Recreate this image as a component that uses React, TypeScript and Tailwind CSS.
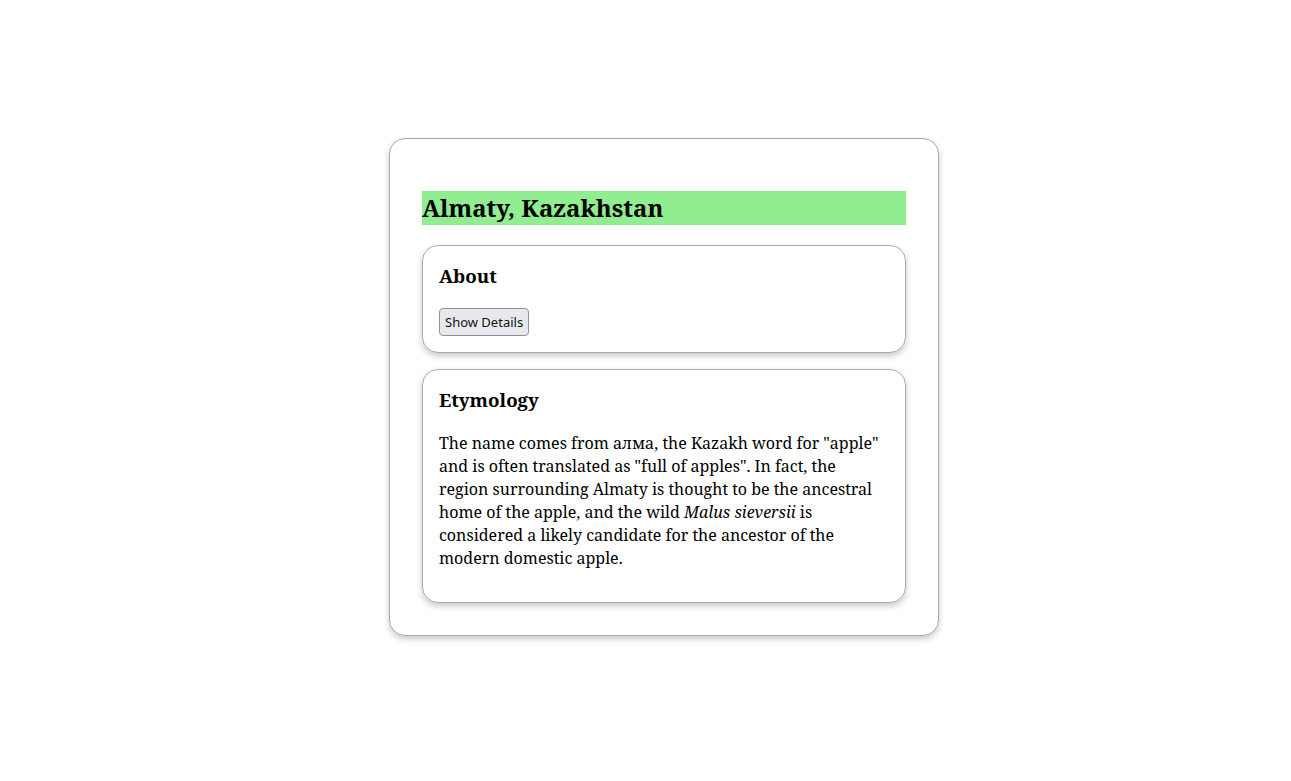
export default function App() {
  return (
    <div
      className="min-h-screen bg-white pl-[389px] pt-[138px] text-black"
      style={{ fontFamily: '"Noto Serif", "DejaVu Serif", serif' }}
    >
      <div className="w-[550px] rounded-2xl border border-[#a9a9a9] px-8 pb-8 pt-[52px] shadow-[0_3px_6px_rgba(0,0,0,0.22)]">
        <h2 className="mb-5 bg-[#90ee90] text-[24px] font-bold leading-[34px]">Almaty, Kazakhstan</h2>

        <section className="mb-4 rounded-2xl border border-[#a9a9a9] px-4 pb-4 pt-[17px] shadow-[0_3px_6px_rgba(0,0,0,0.22)]">
          <h3 className="mb-[19px] text-[18.72px] font-bold leading-[26px]">About</h3>
          <button
            className="rounded border border-[#8f8f9d] bg-[#e9e9ed] px-[5px] py-[3px] text-[13px] leading-[20px] text-[#111]"
            style={{ fontFamily: '"Noto Sans", "Open Sans", sans-serif' }}
          >
            Show Details
          </button>
        </section>

        <section className="rounded-2xl border border-[#a9a9a9] px-4 pb-4 pt-[17px] shadow-[0_3px_6px_rgba(0,0,0,0.22)]">
          <h3 className="mb-[19px] text-[18.72px] font-bold leading-[26px]">Etymology</h3>
          <p className="mb-4 text-[16px] leading-[23px]">
            The name comes from алма, the Kazakh word for "apple" and is often translated as "full of apples". In
            fact, the region surrounding Almaty is thought to be the ancestral home of the apple, and the wild{" "}
            <i>Malus sieversii</i> is considered a likely candidate for the ancestor of the modern domestic apple.
          </p>
        </section>
      </div>
    </div>
  );
}
